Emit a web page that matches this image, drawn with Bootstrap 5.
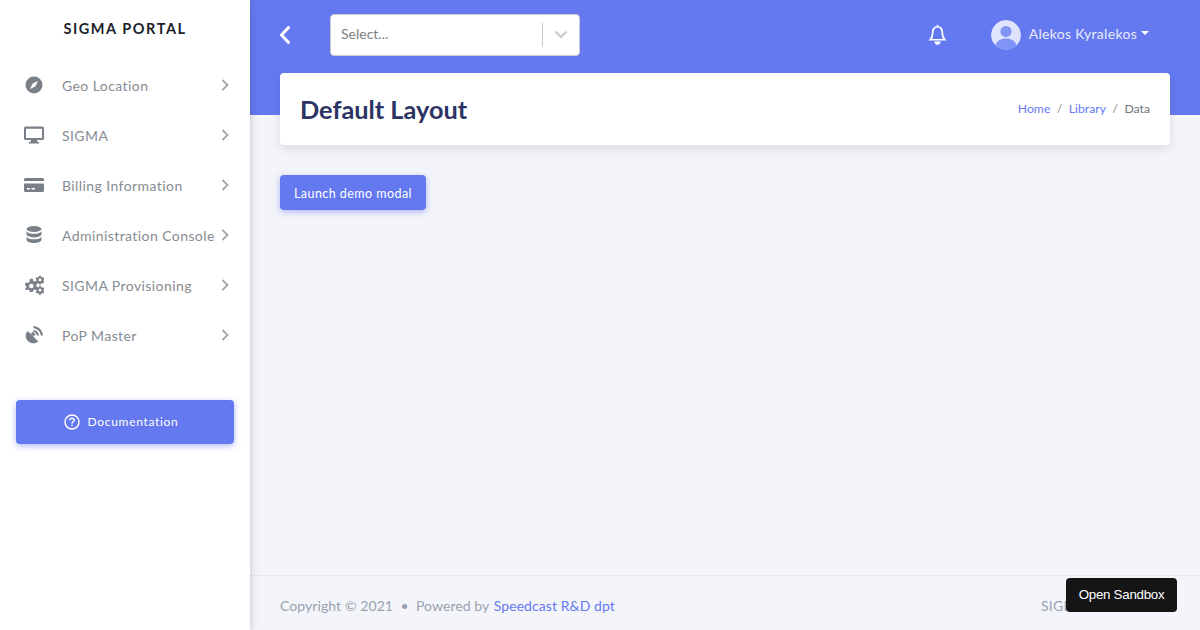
<!DOCTYPE html>
<html lang="en"><head><meta charset="utf-8"><title>Default Layout</title>
<link href="https://cdn.jsdelivr.net/npm/bootstrap@5.3.0/dist/css/bootstrap.min.css" rel="stylesheet">
<style>
html,body{height:100%;margin:0;overflow:hidden}
body{font-family:"Lato","Noto Sans",sans-serif;background:#f4f5fa;font-size:14px;color:#6c757d}
.shell{width:1200px;height:630px}
.side{width:250px;flex:none;background:#fff;box-shadow:0 0 8px rgba(58,59,69,.28);z-index:2}
.brand{height:61px;font-weight:700;font-size:14.500px;letter-spacing:1.55px;color:#1c1f2b;padding-top:20px;line-height:18px;text-align:center}
.menu-row{height:50px;padding:0 20px 0 24px;color:#868c93;font-size:14px;letter-spacing:.42px;text-decoration:none;white-space:nowrap}
.menu-ico{width:20px;height:20px;fill:#7a8087;flex:none;margin:-2px 18px 0 0}
.menu-row .lbl{flex:1;padding-bottom:2px}
.chev{width:10px;height:12px;fill:none;stroke:#a2a7ad;stroke-width:1.8;flex:none;margin-top:-3px}
.doc-wrap{padding:39px 16px 0}
.doc-btn{background:#6478f0;border:0;border-radius:4px;height:44px;width:100%;color:#fff;font-size:12px;letter-spacing:.68px;padding-right:20px;box-shadow:0 2px 6px rgba(100,120,240,.5)}
.main-area{min-width:0;position:relative}
.band{background:#6478f0;height:115px;padding:0 30px}
.topbar{height:69px}
.back{width:12px;height:20px;fill:none;stroke:#fff;stroke-width:3;stroke-linecap:round;stroke-linejoin:round;margin-right:39px;margin-left:-1px}
.pick{width:250px;height:42px;background:#fff;border:1px solid #ccc;border-radius:4px;padding-left:10px;color:#808080;font-size:14px}
.pick .txt{padding-bottom:2px}
.pick .sep{width:1px;height:24px;background:#ccc;margin-right:11px}
.pick .down{width:14px;height:9px;fill:none;stroke:#ccc;stroke-width:2.200;margin-right:11px}
.bell{width:19px;height:22px;fill:none;stroke:#fff;stroke-width:1.900;margin-right:44px}
.avatar{width:30px;height:30px;border-radius:50%;margin-right:8px}
.uname{color:#e9ecfd;font-size:14px;letter-spacing:.3px;padding-bottom:2px}
.caret{width:0;height:0;border-left:4px solid transparent;border-right:4px solid transparent;border-top:4px solid #fff;margin:-4px 21px 0 4px}
.title-card{height:72px;background:#fff;border-radius:4px;box-shadow:0 4px 10px rgba(58,59,69,.13);padding:0 20px;margin-top:4px}
.title-card h1{font-size:25.300px;font-weight:700;color:#2b3462;margin:0}
.crumbs{font-size:12.200px;margin:0;--bs-breadcrumb-divider-color:#888;--bs-breadcrumb-item-padding-x:6.500px}
.crumbs a{color:#6478f0;text-decoration:none}
.crumbs .active{color:#6c757d}
.body-pad{padding:60px 30px 0}
.launch{background:#6478f0;border:0;border-radius:4px;color:#fff;height:35px;width:146px;font-size:12.500px;letter-spacing:.45px;padding:3px 0 0;box-shadow:0 2px 6px rgba(100,120,240,.5)}
.foot{height:55px;border-top:1px solid #e6e7ec;padding:4px 30px 0;color:#98a2ae;font-size:14px;letter-spacing:.08px}
.foot a{color:#6478f0;text-decoration:none;margin-left:1px}
.foot-right{letter-spacing:.2px}
.sandbox{position:absolute;right:23px;bottom:18px;width:111px;height:34px;background:#151515;border-radius:4px;color:#fff;font-family:"Liberation Sans",sans-serif;font-size:13.300px;letter-spacing:-.25px;padding-bottom:1px}
</style></head><body>
<div class="shell d-flex">
<aside class="side d-flex flex-column">
<div class="brand">SIGMA PORTAL</div>
<nav class="d-flex flex-column">
<a class="menu-row d-flex align-items-center" href="#"><svg class="menu-ico" viewBox="0 0 20 20"><path fill-rule="evenodd" d="M10 1.500a8.500 8.500 0 1 0 0 17 8.500 8.500 0 0 0 0-17zm4 4.500-2.600 5.500L6 14l2.600-5.500z"/></svg><span class="lbl">Geo Location</span><svg class="chev" viewBox="0 0 10 12"><path d="M2.500 1l5 5-5 5"/></svg></a>
<a class="menu-row d-flex align-items-center" href="#"><svg class="menu-ico" viewBox="0 0 20 20"><path fill-rule="evenodd" d="M1.500 1.500h17A1.500 1.500 0 0 1 20 3v10.500a1.500 1.500 0 0 1-1.500 1.500H13l.5 2H15v1.500H5V17h1.500l.5-2H1.500A1.500 1.500 0 0 1 0 13.500V3a1.500 1.500 0 0 1 1.500-1.500zm.5 2.200v9.300h16V3.700z"/></svg><span class="lbl">SIGMA</span><svg class="chev" viewBox="0 0 10 12"><path d="M2.500 1l5 5-5 5"/></svg></a>
<a class="menu-row d-flex align-items-center" href="#"><svg class="menu-ico" viewBox="0 0 20 20"><path fill-rule="evenodd" d="M0 8.500h20v7A1.500 1.500 0 0 1 18.500 17h-17A1.500 1.500 0 0 1 0 15.500zm3 4.500v1.500h3V13zm4.500 0v1.500H11V13z"/><path d="M1.500 3h17A1.500 1.500 0 0 1 20 4.500V6H0V4.500A1.500 1.500 0 0 1 1.500 3z"/></svg><span class="lbl">Billing Information</span><svg class="chev" viewBox="0 0 10 12"><path d="M2.500 1l5 5-5 5"/></svg></a>
<a class="menu-row d-flex align-items-center" href="#"><svg class="menu-ico" viewBox="0 0 20 20"><ellipse cx="10" cy="4" rx="7.500" ry="3"/><path d="M2.500 6.200c1.200 1.900 4.300 2.600 7.500 2.600s6.300-.7 7.500-2.600v3.300c-.7 1.800-3.800 2.900-7.500 2.900s-6.800-1.100-7.500-2.900z"/><path d="M2.500 11.700c1.200 1.900 4.300 2.600 7.500 2.600s6.300-.7 7.500-2.600V15c-.6 1.900-3.800 3-7.500 3s-6.900-1.100-7.500-3z"/></svg><span class="lbl">Administration Console</span><svg class="chev" viewBox="0 0 10 12"><path d="M2.500 1l5 5-5 5"/></svg></a>
<a class="menu-row d-flex align-items-center" href="#"><svg class="menu-ico" viewBox="0 0 20 20"><path fill-rule="evenodd" d="M5.800 3.800h3l.4 1.900 1.300.7 1.900-.6 1.500 2.500-1.500 1.300v1.600l1.500 1.300-1.500 2.500-1.900-.6-1.300.8-.4 1.900h-3l-.4-1.900-1.300-.8-1.900.6L.7 14l1.500-1.300v-1.600L.7 9.800l1.500-2.500 1.900.6 1.300-.7zm1.500 4.900a2.300 2.300 0 1 0 0 4.600 2.300 2.300 0 0 0 0-4.600z"/><path fill-rule="evenodd" d="M15 .8h2l.3 1.200.9.500 1.200-.4 1 1.700-.9.900v1l.9.900-1 1.700-1.200-.4-.9.500-.3 1.200h-2l-.3-1.200-.9-.5-1.200.4-1-1.700.9-.9v-1l-.9-.9 1-1.700 1.200.4.900-.5zm1 2.800a1.400 1.400 0 1 0 0 2.800 1.400 1.400 0 0 0 0-2.800z"/><path fill-rule="evenodd" d="M15 11h2l.3 1.200.9.500 1.200-.4 1 1.700-.9.900v1l.9.900-1 1.700-1.200-.4-.9.500-.3 1.200h-2l-.3-1.200-.9-.5-1.200.4-1-1.700.9-.9v-1l-.9-.9 1-1.700 1.200.4.900-.5zm1 2.800a1.400 1.400 0 1 0 0 2.800 1.400 1.400 0 0 0 0-2.800z"/></svg><span class="lbl">SIGMA Provisioning</span><svg class="chev" viewBox="0 0 10 12"><path d="M2.500 1l5 5-5 5"/></svg></a>
<a class="menu-row d-flex align-items-center" href="#"><svg class="menu-ico" viewBox="0 0 20 20"><path d="M3.800 6l10.500 10.500c-3 2.500-7.500 2.300-10.400-.6-2.800-2.800-3-6.900-.1-9.900z"/><path d="M8.800 6.800l2.700 2.700-2 2-2.700-2.700z"/><path d="M9.500 1c5.100.3 9.200 4.400 9.500 9.500h-2.200C16.500 6.600 13.300 3.500 9.500 3.200zM9.500 5c3 .2 5.300 2.500 5.500 5.500h-2.200c-.2-1.800-1.500-3.100-3.300-3.300z"/></svg><span class="lbl">PoP Master</span><svg class="chev" viewBox="0 0 10 12"><path d="M2.500 1l5 5-5 5"/></svg></a>
</nav>
<div class="doc-wrap"><button class="doc-btn btn d-flex align-items-center justify-content-center" type="button"><svg class="me-2" width="16" height="16" viewBox="0 0 16 16" fill="none" stroke="#fff" stroke-width="1.500"><circle cx="8" cy="8" r="7"/><path d="M5.800 6.200C5.900 4.900 6.900 4.200 8 4.200c1.300 0 2.200.9 2.200 1.900 0 1.700-2.200 1.600-2.200 3.300"/><path d="M8 10.800v1.300"/></svg><span>Documentation</span></button></div>
</aside>
<div class="main-area flex-grow-1 d-flex flex-column">
<div class="band">
<div class="topbar d-flex align-items-center">
<svg class="back" viewBox="0 0 12 20"><path d="M9.500 2.500L2.500 10l7 7.500"/></svg>
<div class="pick d-flex align-items-center"><span class="txt flex-grow-1">Select...</span><span class="sep"></span><svg class="down" viewBox="0 0 14 9"><path d="M1.500 1.500L7 7l5.500-5.500"/></svg></div>
<div class="ms-auto d-flex align-items-center">
<svg class="bell" viewBox="0 0 22 24"><path d="M11 2.500c-3.600 0-5.500 2.800-5.500 6 0 5-1.200 7-3 9h17c-1.800-2-3-4-3-9 0-3.200-1.900-6-5.500-6z"/><path d="M11 1v1.500" stroke-linecap="round"/><path d="M8.500 20.500h5c-.5 1.600-1.500 2-2.500 2s-2-.4-2.500-2z" fill="#fff"/></svg>
<svg class="avatar" viewBox="0 0 30 30"><circle cx="15" cy="15" r="15" fill="#dfe3fb"/><circle cx="15" cy="11.500" r="5.500" fill="#8094f5"/><path d="M4.500 26c1-5.500 5-7.500 10.500-7.500S24.500 20.500 25.500 26A15 15 0 0 1 15 30 15 15 0 0 1 4.500 26z" fill="#8094f5"/></svg>
<span class="uname">Alekos Kyralekos</span><span class="caret"></span>
</div></div>
<div class="title-card d-flex align-items-center justify-content-between">
<h1>Default Layout</h1>
<ol class="breadcrumb crumbs"><li class="breadcrumb-item"><a href="#">Home</a></li><li class="breadcrumb-item"><a href="#">Library</a></li><li class="breadcrumb-item active">Data</li></ol>
</div></div>
<div class="body-pad flex-grow-1"><button class="launch btn" type="button">Launch demo modal</button></div>
<footer class="foot d-flex align-items-center justify-content-between"><span>Copyright © 2021 &nbsp;•&nbsp; Powered by <a href="#">Speedcast R&amp;D dpt</a></span><span class="foot-right">SIGMA Portal v1.0.0</span></footer>
<div class="sandbox d-flex align-items-center justify-content-center">Open Sandbox</div>
</div></div>
<script src="https://cdn.jsdelivr.net/npm/bootstrap@5.3.0/dist/js/bootstrap.bundle.min.js"></script>
</body></html>
